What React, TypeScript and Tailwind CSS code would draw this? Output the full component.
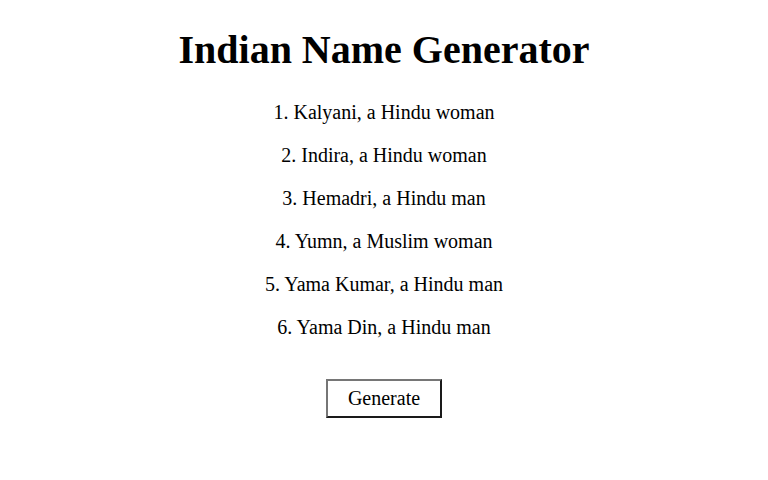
import React from 'react'

const names = [
  'Kalyani, a Hindu woman',
  'Indira, a Hindu woman',
  'Hemadri, a Hindu man',
  'Yumn, a Muslim woman',
  'Yama Kumar, a Hindu man',
  'Yama Din, a Hindu man',
]

export default function App() {
  return (
    <div className="min-h-screen bg-white text-black font-['Liberation_Serif','Times_New_Roman',serif] flex flex-col items-center">
      <h1 className="mt-[27px] text-[40px] leading-[46px] font-bold">Indian Name Generator</h1>

      {/* numbered list of generated names */}
      <div className="mt-[28px] flex flex-col items-center gap-[20px] text-[20px] leading-[23px]">
        {names.map((name, i) => (
          <p key={i}>
            {i + 1}. {name}
          </p>
        ))}
      </div>

      <button className="mt-[40px] px-[20px] py-[6px] text-[20px] leading-[23px] bg-white border-2 border-t-[#767676] border-l-[#767676] border-r-[#1a1a1a] border-b-[#1a1a1a]">
        Generate
      </button>
    </div>
  )
}
